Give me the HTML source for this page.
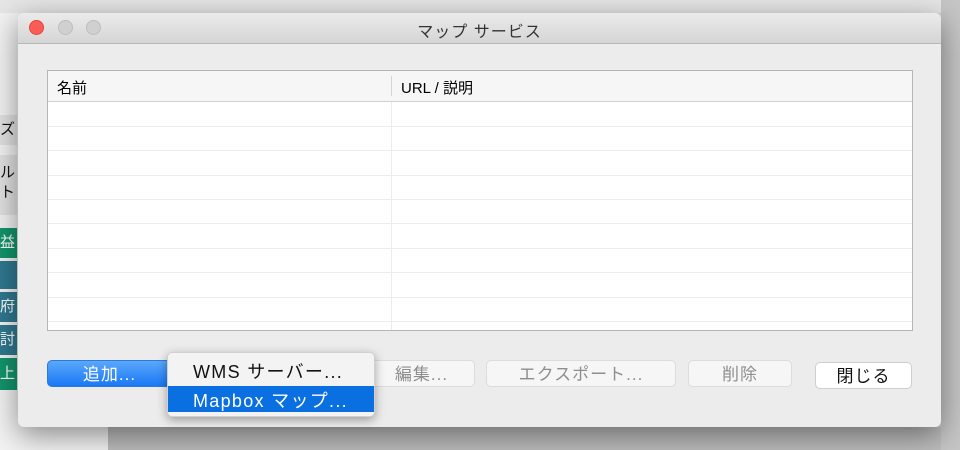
<!DOCTYPE html>
<html><head><meta charset="utf-8"><style>
body{margin:0;width:960px;height:450px;overflow:hidden;background:#d4d4d4;font-family:"Liberation Sans","Noto Sans CJK JP",sans-serif;position:relative}
.abs{position:absolute}
.win{left:18px;top:13px;width:923px;height:414px;background:#ececec;border-radius:6px;box-shadow:0 8px 30px rgba(0,0,0,.45);overflow:hidden}
.tb{left:0;top:0;width:923px;height:30px;background:linear-gradient(#ebebeb,#d5d5d5);border-bottom:1px solid #b9b9b9}
.dot{width:15px;height:15px;border-radius:50%;top:7px;background:#d0d0d0;border:0.5px solid #bdbdbd;box-sizing:border-box}
.title{left:0;width:923px;top:5px;text-align:center;font-size:16px;color:#333;letter-spacing:1px}
.tbl{left:29px;top:57px;width:864px;height:259px;border:1px solid #b5b5b5;background:#fff}
.hdr{left:0;top:0;width:864px;height:30px;background:#f6f6f6;border-bottom:1px solid #d0d0d0;font-size:15px}
.row{left:0;width:864px;height:1px;background:#ececec}
.btn{height:27px;border-radius:5px;background:#f6f6f6;border:1px solid #dcdcdc;font-size:17px;letter-spacing:1px;color:#8e8e8e;text-align:center;line-height:27px;box-sizing:border-box}
.side{left:0;width:17px;font-size:15px;color:#fff;overflow:hidden;white-space:nowrap}
</style></head><body>
<div class="abs" style="left:0;top:0;width:108px;height:450px;background:#f3f3f3;border-right:1px solid #ccc"></div>
<div class="abs" style="left:0;top:0;width:960px;height:13px;background:#e6e6e6"></div>
<div class="abs" style="left:108px;top:427px;width:852px;height:23px;background:#bdbdbd"></div>
<div class="abs" style="left:941px;top:0;width:19px;height:450px;background:#c6c6c6"></div>
<div class="abs side" style="top:115px;height:30px;background:#e2e2e2;color:#111;line-height:30px">ズ</div>
<div class="abs side" style="top:155px;height:60px;background:#e2e2e2;color:#111;line-height:20px;padding-top:8px;box-sizing:border-box">ル<br>ト</div>
<div class="abs side" style="top:228px;height:30px;background:#12966b;line-height:30px">益</div>
<div class="abs side" style="top:261px;height:28px;background:#2f7990"></div>
<div class="abs side" style="top:292px;height:30px;background:#2f7990;line-height:30px">府</div>
<div class="abs side" style="top:325px;height:30px;background:#2f7990;line-height:30px">討</div>
<div class="abs side" style="top:358px;height:32px;background:#12966b;line-height:32px">上</div>
<div class="abs win">
 <div class="abs tb"></div>
 <div class="abs dot" style="left:11px;background:#fd5b56;border-color:#e0443e"></div>
 <div class="abs dot" style="left:40px"></div>
 <div class="abs dot" style="left:68px"></div>
 <div class="abs title">マップ サービス</div>
 <div class="abs tbl">
  <div class="abs hdr"><span class="abs" style="left:9px;top:6px">名前</span><span class="abs" style="left:343px;top:5px;width:1px;height:20px;background:#d5d5d5"></span><span class="abs" style="left:353px;top:6px">URL / 説明</span></div>
  <div class="abs" style="left:343px;top:31px;width:1px;height:228px;background:#ececec"></div>
  <div class="abs row" style="top:55px"></div><div class="abs row" style="top:79px"></div><div class="abs row" style="top:104px"></div><div class="abs row" style="top:128px"></div><div class="abs row" style="top:152px"></div><div class="abs row" style="top:177px"></div><div class="abs row" style="top:201px"></div><div class="abs row" style="top:226px"></div><div class="abs row" style="top:250px"></div>
 </div>
 <div class="abs btn" style="left:29px;top:347px;width:125px;background:linear-gradient(#5aa8fb,#1a78f5);border-color:#2b79e0;color:#fff">追加...</div>
 <div class="abs btn" style="left:350px;top:347px;width:107px">編集...</div>
 <div class="abs btn" style="left:468px;top:347px;width:190px">エクスポート...</div>
 <div class="abs btn" style="left:670px;top:347px;width:104px">削除</div>
 <div class="abs btn" style="left:797px;top:349px;width:97px;background:#fff;color:#111;border-color:#cfcfcf">閉じる</div>
</div>
<div class="abs" style="left:167px;top:352px;width:208px;height:65px;background:#f3f3f3;border-radius:5px;box-shadow:0 3px 10px rgba(0,0,0,.35);border:1px solid #d0d0d0;box-sizing:border-box;overflow:hidden">
 <div class="abs" style="left:25px;top:5px;font-size:18px;letter-spacing:1.3px;color:#111;white-space:nowrap">WMS サーバー...</div>
 <div class="abs" style="left:0;top:33px;width:208px;height:26px;background:#0a6fe0"></div>
 <div class="abs" style="left:25px;top:34px;font-size:18px;letter-spacing:1.3px;color:#fff;white-space:nowrap">Mapbox マップ...</div>
</div>
</body></html>
